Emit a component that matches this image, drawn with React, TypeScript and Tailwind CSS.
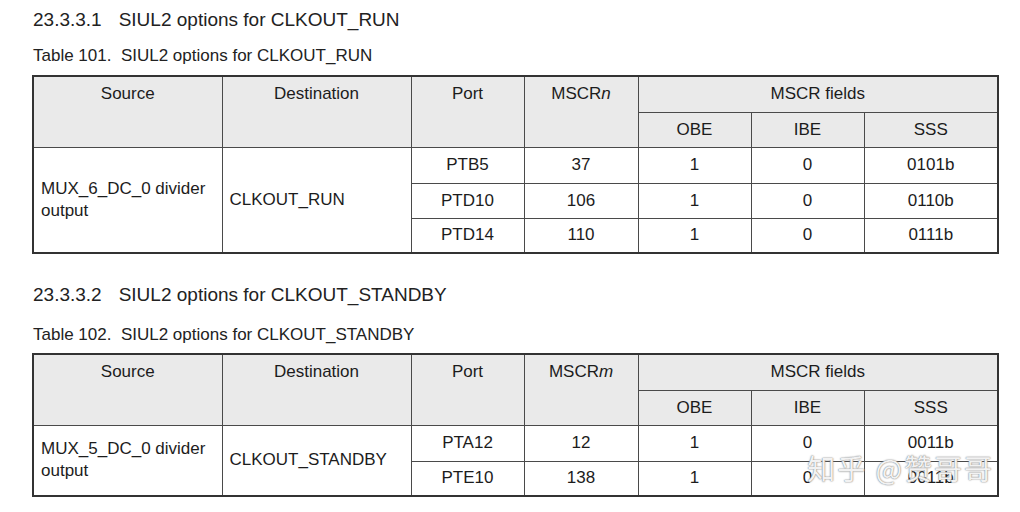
import React from "react";

type Row = { port: string; mscr: string; obe: string; ibe: string; sss: string };

const cell = "border border-[#4a4a4a] text-center align-middle";
const head = "border border-[#4a4a4a] bg-[#eaeaea] text-center font-normal";

function SiulTable({
  source,
  destination,
  index,
  rows,
}: {
  source: string;
  destination: string;
  index: string;
  rows: Row[];
}) {
  return (
    <table className="table-fixed border-collapse border-2 border-[#333] w-[965px] text-[17px] leading-[22px] text-[#1c1c1c]">
      <colgroup>
        <col className="w-[189px]" />
        <col className="w-[189px]" />
        <col className="w-[113px]" />
        <col className="w-[114px]" />
        <col className="w-[113px]" />
        <col className="w-[113px]" />
        <col className="w-[134px]" />
      </colgroup>
      <thead>
        <tr className="h-[36px]">
          <th rowSpan={2} className={`${head} align-top pt-[6px]`}>
            Source
          </th>
          <th rowSpan={2} className={`${head} align-top pt-[6px]`}>
            Destination
          </th>
          <th rowSpan={2} className={`${head} align-top pt-[6px]`}>
            Port
          </th>
          <th rowSpan={2} className={`${head} align-top pt-[6px]`}>
            MSCR<span className="italic">{index}</span>
          </th>
          <th colSpan={3} className={`${head} align-middle`}>
            MSCR fields
          </th>
        </tr>
        <tr className="h-[35px]">
          <th className={head}>OBE</th>
          <th className={head}>IBE</th>
          <th className={head}>SSS</th>
        </tr>
      </thead>
      <tbody>
        {rows.map((r, i) => (
          <tr key={r.port} className={i === 0 ? "h-[36px]" : "h-[35px]"}>
            {i === 0 && (
              <>
                <td rowSpan={rows.length} className="border border-[#4a4a4a] align-middle text-left pl-[7px] pr-2">
                  {source}
                </td>
                <td rowSpan={rows.length} className="border border-[#4a4a4a] align-middle text-left pl-[7px]">
                  {destination}
                </td>
              </>
            )}
            <td className={cell}>{r.port}</td>
            <td className={cell}>{r.mscr}</td>
            <td className={cell}>{r.obe}</td>
            <td className={cell}>{r.ibe}</td>
            <td className={cell}>{r.sss}</td>
          </tr>
        ))}
      </tbody>
    </table>
  );
}

function Heading({ num, text }: { num: string; text: string }) {
  return (
    <h2 className="pl-[1px] text-[19px] leading-[24px] text-[#222] font-normal">
      <span>{num}</span>
      <span className="ml-[17px]">{text}</span>
    </h2>
  );
}

export default function App() {
  return (
    <div className="w-[1020px] h-[512px] bg-white overflow-hidden font-['Liberation_Sans',Arial,sans-serif] pl-[32px] pt-[8px]">
      <Heading num="23.3.3.1" text="SIUL2 options for CLKOUT_RUN" />
      <p className="pl-[1px] mt-[13px] text-[17px] leading-[22px] text-[#222]">
        Table 101.&nbsp; SIUL2 options for CLKOUT_RUN
      </p>
      <div className="mt-[8px]">
        <SiulTable
          source="MUX_6_DC_0 divider output"
          destination="CLKOUT_RUN"
          index="n"
          rows={[
            { port: "PTB5", mscr: "37", obe: "1", ibe: "0", sss: "0101b" },
            { port: "PTD10", mscr: "106", obe: "1", ibe: "0", sss: "0110b" },
            { port: "PTD14", mscr: "110", obe: "1", ibe: "0", sss: "0111b" },
          ]}
        />
      </div>

      <div className="mt-[29px]">
        <Heading num="23.3.3.2" text="SIUL2 options for CLKOUT_STANDBY" />
      </div>
      <p className="pl-[1px] mt-[17px] text-[17px] leading-[22px] text-[#222]">
        Table 102.&nbsp; SIUL2 options for CLKOUT_STANDBY
      </p>
      <div className="relative mt-[7px] w-[965px]">
        <SiulTable
          source="MUX_5_DC_0 divider output"
          destination="CLKOUT_STANDBY"
          index="m"
          rows={[
            { port: "PTA12", mscr: "12", obe: "1", ibe: "0", sss: "0011b" },
            { port: "PTE10", mscr: "138", obe: "1", ibe: "0", sss: "0011b" },
          ]}
        />
        {/* zhihu watermark */}
        <div className="absolute right-[3px] bottom-[14px] text-[28px] leading-[30px] tracking-[2px] text-white/90 font-['Noto_Sans_CJK_SC',sans-serif] [text-shadow:0_0_1px_#777,0_0_2px_#999] whitespace-nowrap">
          知乎 @赞哥哥
        </div>
      </div>
    </div>
  );
}
